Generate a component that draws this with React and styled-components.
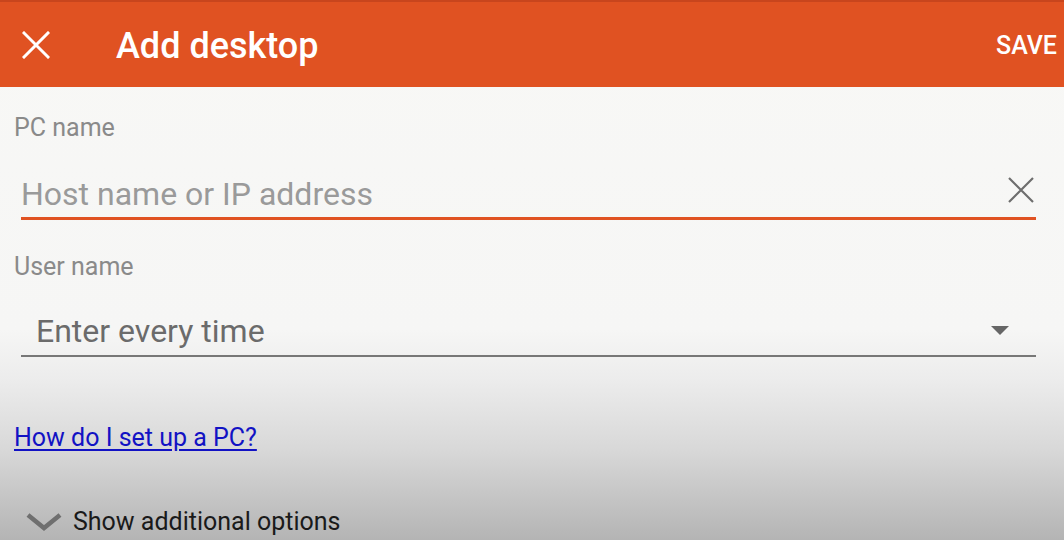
import React from "react";
import styled, { createGlobalStyle } from "styled-components";

const Global = createGlobalStyle`
  html, body { margin: 0; padding: 0; }
  body {
    font-family: Roboto, "Noto Sans", sans-serif;
    background: linear-gradient(to bottom, #f8f8f6 0px, #f6f6f5 330px, #ececec 380px, #d8d8d8 450px, #b4b4b4 540px);
    min-height: 540px;
    overflow: hidden;
  }
`;

const Page = styled.div`
  width: 1064px;
  height: 540px;
  display: flex;
  flex-direction: column;
`;

const Header = styled.header`
  height: 85px;
  background: #e05222;
  border-top: 2px solid #c8451d;
  display: flex;
  align-items: center;
  color: #fff;
`;

const IconButton = styled.button`
  width: 72px;
  height: 72px;
  border: 0;
  background: transparent;
  padding: 0;
  display: flex;
  align-items: center;
  justify-content: center;
  color: inherit;
`;

const Title = styled.h1`
  margin: 2px 0 0 44px;
  font-size: 36px;
  font-weight: 500;
  flex: 1;
`;

const Save = styled.span`
  font-size: 25px;
  font-weight: 500;
  margin-right: 7px;
  margin-top: 2px;
`;

const Body = styled.main`
  padding: 0 28px 0 14px;
  display: flex;
  flex-direction: column;
`;

const Label = styled.div`
  font-size: 25px;
  color: #8a8a8a;
  margin-top: ${(p) => p.$top}px;
  line-height: 30px;
`;

const Field = styled.div`
  margin-left: 7px;
  height: ${(p) => p.$h}px;
  display: flex;
  align-items: flex-end;
  padding-bottom: ${(p) => p.$pb}px;
  border-bottom: ${(p) => (p.$active ? "3px solid #e05222" : "2px solid #777")};
  box-sizing: border-box;
`;

const FieldText = styled.span`
  flex: 1;
  font-size: 32px;
  line-height: 32px;
  color: ${(p) => p.$color};
  padding-left: ${(p) => p.$pad}px;
`;

const Link = styled.a`
  margin-top: 66px;
  font-size: 25px;
  color: #1212c4;
  text-decoration: underline;
  text-underline-offset: 3px;
  line-height: 30px;
`;

const Expand = styled.div`
  margin-top: 54px;
  display: flex;
  align-items: center;
  gap: 11px;
  margin-left: 12px;
  font-size: 25px;
  color: #1a1a1a;
`;

export default function App() {
  return (
    <>
      <Global />
      <Page>
        <Header>
          <IconButton aria-label="close">
            <svg width="28" height="28" viewBox="0 0 28 28">
              <path d="M2 2L26 26M26 2L2 26" stroke="#fff" strokeWidth="3" strokeLinecap="square" />
            </svg>
          </IconButton>
          <Title>Add desktop</Title>
          <Save>SAVE</Save>
        </Header>
        <Body>
          <Label $top={26}>PC name</Label>
          <Field $h={77} $pb={7} $active>
            <FieldText $color="#9a9a9a" $pad={0}>Host name or IP address</FieldText>
            <svg width="26" height="26" viewBox="0 0 26 26" style={{ marginRight: 2, marginBottom: 7 }}>
              <path d="M1 1L25 25M25 1L1 25" stroke="#6e6e6e" strokeWidth="2.2" />
            </svg>
          </Field>
          <Label $top={32}>User name</Label>
          <Field $h={75} $pb={8}>
            <FieldText $color="#6b6b6b" $pad={15}>Enter every time</FieldText>
            <svg width="18" height="10" viewBox="0 0 18 10" style={{ marginRight: 27, marginBottom: 11 }}>
              <path d="M0 0H18L9 9Z" fill="#666" />
            </svg>
          </Field>
          <Link href="#">How do I set up a PC?</Link>
          <Expand>
            <svg width="36" height="20" viewBox="0 0 36 20">
              <path d="M2 3L18 16L34 3" stroke="#6f6f6f" strokeWidth="4.5" fill="none" />
            </svg>
            <span>Show additional options</span>
          </Expand>
        </Body>
      </Page>
    </>
  );
}
